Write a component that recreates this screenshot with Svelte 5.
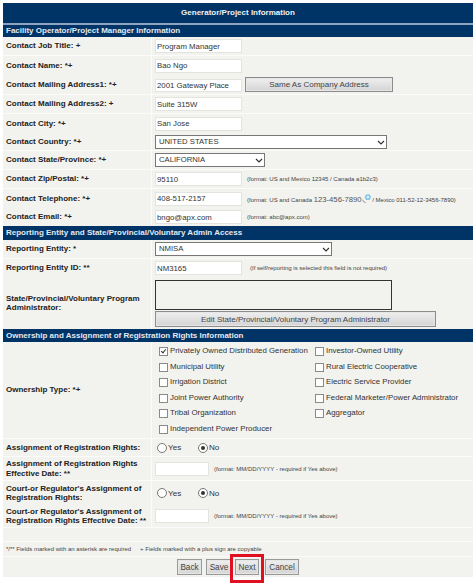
<script>
  const firstCol = [
    { label: "Privately Owned Distributed Generation", checked: true },
    { label: "Municipal Utility" },
    { label: "Irrigation District" },
    { label: "Joint Power Authority" },
    { label: "Tribal Organization" },
    { label: "Independent Power Producer" }
  ];
  const secondCol = [
    "Investor-Owned Utility",
    "Rural Electric Cooperative",
    "Electric Service Provider",
    "Federal Marketer/Power Administrator",
    "Aggregator"
  ];
</script>

<div class="page">
  <div class="title">Generator/Project Information</div>

  <div class="section first">Facility Operator/Project Manager Information</div>
  <div class="row h19 line">
    <div class="label">Contact Job Title: +</div>
    <div class="field"><input class="text" value="Program Manager" /></div>
  </div>
  <div class="row h19">
    <div class="label">Contact Name: *+</div>
    <div class="field"><input class="text" value="Bao Ngo" /></div>
  </div>
  <div class="row h20 line">
    <div class="label">Contact Mailing Address1: *+</div>
    <div class="field">
      <input class="text low" value="2001 Gateway Place" />
      <button class="btn same">Same As Company Address</button>
    </div>
  </div>
  <div class="row h19 line">
    <div class="label">Contact Mailing Address2: +</div>
    <div class="field"><input class="text" value="Suite 315W" /></div>
  </div>
  <div class="row h19">
    <div class="label">Contact City: *+</div>
    <div class="field"><input class="text" value="San Jose" /></div>
  </div>
  <div class="row h18 line">
    <div class="label">Contact Country: *+</div>
    <div class="field">
      <div class="select country">
        <select><option>UNITED STATES</option></select>
        <svg viewBox="0 0 8 5"><path d="M1 1l3 3 3-3" /></svg>
      </div>
    </div>
  </div>
  <div class="row h19 line">
    <div class="label">Contact State/Province: *+</div>
    <div class="field">
      <div class="select state">
        <select><option>CALIFORNIA</option></select>
        <svg viewBox="0 0 8 5"><path d="M1 1l3 3 3-3" /></svg>
      </div>
    </div>
  </div>
  <div class="row h19 line">
    <div class="label">Contact Zip/Postal: *+</div>
    <div class="field">
      <input class="text" value="95110" />
      <span class="hint">(format: US and Mexico 12345 / Canada a1b2c3)</span>
    </div>
  </div>
  <div class="row h19">
    <div class="label">Contact Telephone: *+</div>
    <div class="field">
      <input class="text" value="408-517-2157" />
      <span class="hint">(format: US and Canada <span class="phone">123-456-7890</span><svg class="skype" viewBox="0 0 10 10"><circle cx="6.5" cy="3.5" r="3.2" fill="#7ec4ee" /><circle cx="6.5" cy="3.5" r="1.5" fill="#d8effb" /><path d="M0.8 6.5c.5 1.8 1.7 2.8 3.4 3" fill="none" stroke="#7d8a94" stroke-width="1" /></svg> / Mexico 011-52-12-3456-7890)</span>
    </div>
  </div>
  <div class="row h18">
    <div class="label">Contact Email: *+</div>
    <div class="field">
      <input class="text" value="bngo@apx.com" />
      <span class="hint">(format: abc@apx.com)</span>
    </div>
  </div>

  <div class="section second">Reporting Entity and State/Provincial/Voluntary Admin Access</div>
  <div class="row h19 line">
    <div class="label">Reporting Entity: *</div>
    <div class="field">
      <div class="select entity">
        <select><option>NMISA</option></select>
        <svg viewBox="0 0 8 5"><path d="M1 1l3 3 3-3" /></svg>
      </div>
    </div>
  </div>
  <div class="row h18">
    <div class="label">Reporting Entity ID: **</div>
    <div class="field">
      <input class="text" value="NM3165" />
      <span class="hint wide">(If self/reporting is selected this field is not required)</span>
    </div>
  </div>
  <div class="row h52">
    <div class="label">State/Provincial/Voluntary Program Administrator:</div>
    <div class="field admin">
      <div class="adminbox"></div>
      <button class="btn edit">Edit State/Provincial/Voluntary Program Administrator</button>
    </div>
  </div>

  <div class="section">Ownership and Assignment of Registration Rights Information</div>
  <div class="row h97 line">
    <div class="label">Ownership Type: *+</div>
    <div class="field types">
      <div class="typecol">
        {#each firstCol as item}
          <label class="check"><input type="checkbox" checked={item.checked} />{item.label}</label>
        {/each}
      </div>
      <div class="typecol">
        {#each secondCol as item}
          <label class="check"><input type="checkbox" />{item}</label>
        {/each}
      </div>
    </div>
  </div>
  <div class="row h18 line">
    <div class="label">Assignment of Registration Rights:</div>
    <div class="field radios">
      <label class="radio"><input type="radio" name="assign" />Yes</label>
      <label class="radio"><input type="radio" name="assign" checked />No</label>
    </div>
  </div>
  <div class="row h24 line">
    <div class="label">Assignment of Registration Rights Effective Date: **</div>
    <div class="field">
      <input class="text date" />
      <span class="hint">(format: MM/DD/YYYY - required if Yes above)</span>
    </div>
  </div>
  <div class="row h24">
    <div class="label">Court-or Regulator's Assignment of Registration Rights:</div>
    <div class="field radios">
      <label class="radio"><input type="radio" name="court" />Yes</label>
      <label class="radio"><input type="radio" name="court" checked />No</label>
    </div>
  </div>
  <div class="row h23 line">
    <div class="label">Court-or Regulator's Assignment of Registration Rights Effective Date: **</div>
    <div class="field">
      <input class="text date" />
      <span class="hint">(format: MM/DD/YYYY - required if Yes above)</span>
    </div>
  </div>

  <div class="empty"></div>
  <div class="note">
    <span>*/** Fields marked with an asterisk are required</span>
    <span>+ Fields marked with a plus sign are copyable</span>
  </div>
  <div class="actions">
    <button class="btn act back">Back</button>
    <button class="btn act save">Save</button>
    <span class="highlight">
      <button class="btn act next">Next</button>
    </span>
    <button class="btn act cancel">Cancel</button>
  </div>
</div>

<style>
  :global(body) {
    background: #fff;
    font-family: "Liberation Sans", Arial, sans-serif;
  }
  .page {
    box-sizing: border-box;
    width: 474px;
    min-height: 588px;
    padding: 3px 1px 0 3px;
    color: #222;
    font-size: 8px;
  }
  .title {
    height: 20px;
    line-height: 20px;
    background: #003366;
    color: #eef1f5;
    font-weight: bold;
    text-align: center;
    border-bottom: 2px solid #8ea3bf;
    font-size: 8px;
  }
  .section {
    height: 13px;
    line-height: 13px;
    padding-left: 3px;
    background: #003366;
    color: #e4e9f0;
    font-weight: bold;
    font-size: 8px;
    white-space: nowrap;
  }
  .section.first {
    height: 12px;
    line-height: 12px;
  }
  .section.second {
    height: 14px;
    line-height: 14px;
  }
  .row {
    display: grid;
    grid-template-columns: 148px 1fr;
    background: #f2f2ee;
    box-sizing: border-box;
  }
  .row.line {
    border-bottom: 1px solid #fbfbf9;
  }
  .h18 { height: 18px; }
  .h19 { height: 19px; }
  .h20 { height: 20px; }
  .h23 { height: 23px; }
  .h24 { height: 24px; }
  .h52 { height: 52px; }
  .h97 { height: 97px; }
  .label {
    align-self: center;
    padding-left: 3px;
    font-weight: bold;
    line-height: 9.5px;
  }
  .field {
    display: flex;
    align-items: center;
    padding-left: 3px;
    border-left: 1px solid #fbfbf9;
    min-width: 0;
  }
  .text {
    box-sizing: border-box;
    width: 87px;
    height: 14px;
    margin: 0;
    padding: 0 1px;
    background: #fff;
    border: 1px solid #e4e4de;
    color: #333;
    font: 7.8px "Liberation Sans", Arial, sans-serif;
  }
  .text.low {
    height: 13px;
    margin-top: 2px;
  }
  .text.date {
    width: 54px;
  }
  .hint {
    margin-left: 5px;
    color: #444;
    font-size: 6px;
    white-space: nowrap;
  }
  .hint.wide {
    margin-left: 8px;
  }
  .phone {
    font-size: 7.7px;
    color: #555;
  }
  .skype {
    display: inline-block;
    width: 9px;
    height: 9px;
    vertical-align: -1px;
  }
  .btn {
    box-sizing: border-box;
    margin: 0;
    padding: 0;
    background: linear-gradient(#efefef, #d4d4d4);
    border: 1px solid #8c8c8c;
    box-shadow: inset 0 0 0 1px #e6e6e6;
    color: #444;
    font: 8px "Liberation Sans", Arial, sans-serif;
  }
  .same {
    width: 148px;
    height: 15px;
    margin-left: 3px;
  }
  .select {
    position: relative;
    height: 14px;
  }
  .select select {
    appearance: none;
    box-sizing: border-box;
    display: block;
    width: 100%;
    height: 100%;
    margin: 0;
    padding: 0 0 1px 3px;
    background: #fff;
    border: 1px solid #777;
    border-radius: 0;
    color: #333;
    font: 7.7px "Liberation Sans", Arial, sans-serif;
  }
  .select svg {
    position: absolute;
    right: 2px;
    top: 5px;
    width: 8px;
    height: 5px;
    fill: none;
    stroke: #333;
    stroke-width: 1.2;
    pointer-events: none;
  }
  .country { width: 232px; }
  .state { width: 110px; }
  .entity { width: 177px; }
  .admin {
    flex-direction: column;
    align-items: flex-start;
    gap: 1px;
    padding-top: 3px;
  }
  .adminbox {
    box-sizing: border-box;
    width: 237px;
    height: 30px;
    background: #f2f2ee;
    border: 1px solid #333;
  }
  .edit {
    width: 281px;
    height: 16px;
  }
  .types {
    align-items: flex-start;
    padding-top: 1px;
    padding-left: 7px;
  }
  .typecol {
    display: flex;
    flex-direction: column;
  }
  .typecol:first-child {
    width: 156px;
  }
  .check {
    display: flex;
    align-items: center;
    height: 15.5px;
    white-space: nowrap;
    color: #333;
    font-size: 7.85px;
  }
  .check input {
    appearance: none;
    position: relative;
    box-sizing: border-box;
    width: 9px;
    height: 9px;
    margin: 2px 2px 0 0;
    background: #fff;
    border: 1px solid #8a8a8a;
    flex: none;
  }
  .check input:checked::before {
    content: "";
    position: absolute;
    left: 2px;
    top: 0;
    width: 2px;
    height: 4px;
    border: solid #333;
    border-width: 0 1px 1px 0;
    transform: rotate(40deg);
  }
  .radios {
    padding-left: 5px;
    gap: 16px;
  }
  .radio {
    display: flex;
    align-items: center;
    width: 25px;
    color: #333;
    font-size: 8.1px;
  }
  .radio input {
    appearance: none;
    position: relative;
    box-sizing: border-box;
    width: 10px;
    height: 10px;
    margin: 0 1px 0 0;
    background: #fff;
    border: 1px solid #777;
    border-radius: 50%;
    flex: none;
  }
  .radio input:checked::before {
    content: "";
    position: absolute;
    left: 2px;
    top: 2px;
    width: 4px;
    height: 4px;
    border-radius: 50%;
    background: #333;
  }
  .empty {
    box-sizing: border-box;
    height: 14px;
    background: #f2f2ee;
    border-bottom: 1px solid #fbfbf9;
  }
  .note {
    box-sizing: border-box;
    display: flex;
    gap: 9px;
    height: 15px;
    line-height: 15px;
    padding-left: 3px;
    background: #f2f2ee;
    border-bottom: 1px solid #fbfbf9;
    color: #444;
    font-size: 6px;
    white-space: nowrap;
  }
  .actions {
    display: flex;
    align-items: flex-start;
    height: 20px;
    padding: 2px 0 0 174px;
    box-sizing: border-box;
    background: #f2f2ee;
  }
  .act {
    height: 16px;
    font-size: 8.2px;
    border-color: #999;
    border-width: 1px;
  }
  .back { width: 25px; margin-right: 4px; }
  .save { width: 26px; margin-right: 3px; }
  .cancel { width: 34px; margin-left: 6px; }
  .highlight {
    position: relative;
    display: block;
    width: 24px;
    height: 16px;
  }
  .next {
    width: 24px;
    display: block;
  }
  .highlight::after {
    content: "";
    position: absolute;
    left: -5px;
    top: -5px;
    width: 34px;
    height: 29px;
    box-sizing: border-box;
    border: 3px solid #e01020;
    pointer-events: none;
  }
</style>
